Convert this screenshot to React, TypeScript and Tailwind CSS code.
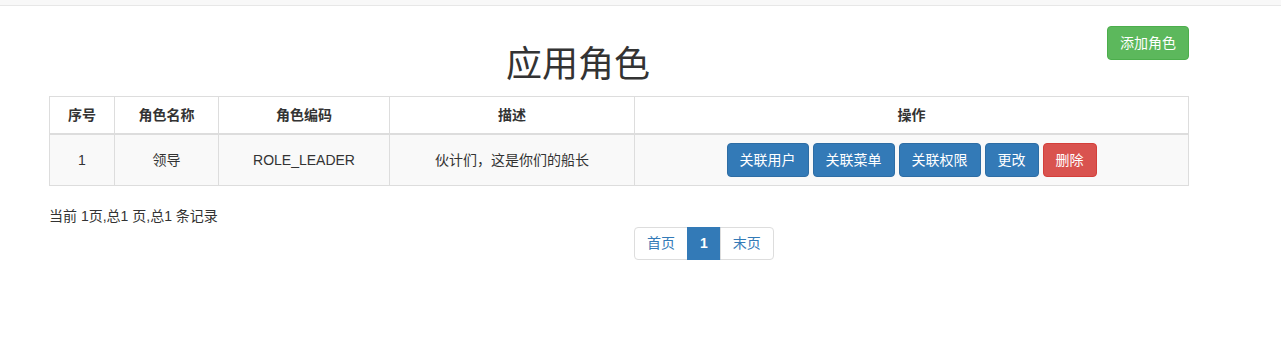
import React from "react";

const font = "font-['Liberation_Sans','Noto_Sans_CJK_SC',sans-serif]";

const actions = [
  { label: "关联用户", danger: false },
  { label: "关联菜单", danger: false },
  { label: "关联权限", danger: false },
  { label: "更改", danger: false },
  { label: "删除", danger: true },
];

export default function App() {
  return (
    <div className={`${font} min-h-[363px] bg-white text-[14px] leading-[20px] text-[#333]`}>
      <div className="h-[6px] border-b border-[#e7e7e7] bg-[#f8f8f8]" />
      <div className="ml-[49px] w-[1140px]">
        <div className="flex items-start pt-[20px]">
          <h1 className="mt-[19px] flex-1 text-center text-[36px] leading-[40px] font-normal text-[#333]">
            应用角色
          </h1>
          <button className="h-[34px] rounded-[4px] border border-[#4cae4c] bg-[#5cb85c] px-[12px] text-[14px] text-white">
            添加角色
          </button>
        </div>

        <table className="mt-[11px] w-full border-collapse border border-[#ddd] text-center">
          <thead>
            <tr>
              <th className="w-[65px] border border-b-2 border-[#ddd] p-[8px] font-bold">序号</th>
              <th className="w-[104px] border border-b-2 border-[#ddd] p-[8px] font-bold">角色名称</th>
              <th className="w-[171px] border border-b-2 border-[#ddd] p-[8px] font-bold">角色编码</th>
              <th className="w-[245px] border border-b-2 border-[#ddd] p-[8px] font-bold">描述</th>
              <th className="border border-b-2 border-[#ddd] p-[8px] font-bold">操作</th>
            </tr>
          </thead>
          <tbody>
            <tr className="bg-[#f9f9f9]">
              <td className="border border-[#ddd] p-[8px] align-middle">1</td>
              <td className="border border-[#ddd] p-[8px] align-middle">领导</td>
              <td className="border border-[#ddd] p-[8px] align-middle">ROLE_LEADER</td>
              <td className="border border-[#ddd] p-[8px] align-middle">伙计们，这是你们的船长</td>
              <td className="border border-[#ddd] p-[8px] align-middle">
                <div className="flex justify-center gap-[4px]">
                  {actions.map((a) => (
                    <button
                      key={a.label}
                      className={
                        a.danger
                          ? "h-[34px] rounded-[4px] border border-[#d43f3a] bg-[#d9534f] px-[12px] text-white"
                          : "h-[34px] rounded-[4px] border border-[#2e6da4] bg-[#337ab7] px-[12px] text-white"
                      }
                    >
                      {a.label}
                    </button>
                  ))}
                </div>
              </td>
            </tr>
          </tbody>
        </table>

        <div className="mt-[20px]">当前 1页,总1 页,总1 条记录</div>

        <div className="ml-[585px] mt-[1px] flex">
          <span className="h-[33px] rounded-l-[4px] border border-[#ddd] bg-white px-[12px] py-[5px] text-[#337ab7]">
            首页
          </span>
          <span className="-ml-px h-[33px] border border-[#337ab7] bg-[#337ab7] px-[12px] py-[5px] font-bold text-white">
            1
          </span>
          <span className="-ml-px h-[33px] rounded-r-[4px] border border-[#ddd] bg-white px-[12px] py-[5px] text-[#337ab7]">
            末页
          </span>
        </div>
      </div>
    </div>
  );
}
